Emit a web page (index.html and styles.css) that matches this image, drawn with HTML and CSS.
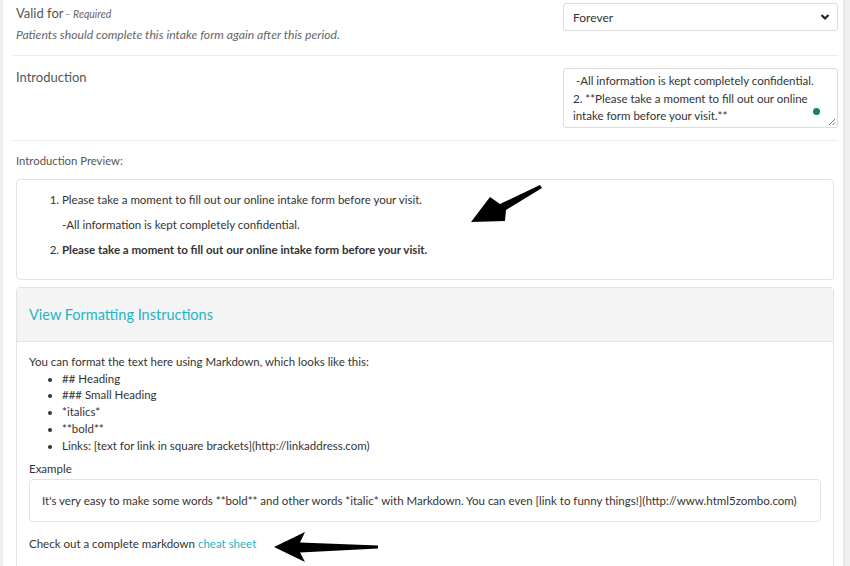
FILE: index.html
```html
<!DOCTYPE html>
<html lang="en">
<head>
    <meta charset="UTF-8">
    <meta name="viewport" content="width=device-width, initial-scale=1.0">
    <title>Intake form settings</title>
    <link rel="stylesheet" href="styles.css">
</head>
<body>
    <div id="page">
        <div class="formrow">
            <div class="labelcol">
                <div class="fieldlabel">Valid for<span class="required">– Required</span></div>
                <div class="hint">Patients should complete this intake form again after this period.</div>
            </div>
            <div class="selectbox">
                <span>Forever</span>
                <svg class="chevron" width="10" height="8" viewBox="0 0 10 8"><path d="M1.5 2 L5 5.5 L8.5 2" fill="none" stroke="#222" stroke-width="2.2"/></svg>
            </div>
        </div>

        <div class="formrow second">
            <div class="labelcol">
                <div class="fieldlabel">Introduction</div>
            </div>
            <div class="textbox">
                <div>&nbsp;-All information is kept completely confidential.</div>
                <div>2. **Please take a moment to fill out our online</div>
                <div>intake form before your visit.**</div>
                <span class="gdot"></span>
                <svg class="grip" width="9" height="9" viewBox="0 0 9 9"><path d="M8 2 L2 8 M8 5.5 L5.5 8" stroke="#777" stroke-width="1"/></svg>
            </div>
        </div>

        <div class="previewlabel">Introduction Preview:</div>
        <div class="previewbox">
            <ol>
                <li><p>Please take a moment to fill out our online intake form before your visit.</p>
                    <p>-All information is kept completely confidential.</p></li>
                <li><p><strong>Please take a moment to fill out our online intake form before your visit.</strong></p></li>
            </ol>
        </div>

        <div class="panel">
            <div class="panelhead">View Formatting Instructions</div>
            <div class="panelbody">
                <div>You can format the text here using Markdown, which looks like this:</div>
                <ul>
                    <li>## Heading</li>
                    <li>### Small Heading</li>
                    <li>*italics*</li>
                    <li>**bold**</li>
                    <li>Links: [text for link in square brackets](http://linkaddress.com)</li>
                </ul>
                <div class="examplelabel">Example</div>
                <div class="examplebox">It's very easy to make some words **bold** and other words *italic* with Markdown. You can even [link to funny things!](http://www.html5zombo.com)</div>
                <div class="cheat">Check out a complete markdown <a href="#">cheat sheet</a></div>
            </div>
        </div>

        <svg class="arrow1" width="80" height="50" viewBox="0 0 80 50">
            <polygon points="73,2 33,21 23,14 4,39 38,38 39,27 75,5" fill="#000"/>
        </svg>
        <svg class="arrow2" width="110" height="36" viewBox="0 0 110 36">
            <polygon points="2,18 33,3 28,13.5 106,16.5 106,19.5 28,23.5 33,33" fill="#000"/>
        </svg>
    </div>
</body>
</html>
```

FILE: styles.css
```css
body{
    margin: 0;
    background-color: #f0f0f0;
    font-family: Lato, "Open Sans", sans-serif;
    color: #333;
}

#page{
    position: relative;
    background-color: #fff;
    margin: 0 5px 0 3px;
    padding: 0 5px 0 9px;
    height: 566px;
    overflow: hidden;
    border-right: 2px solid #e6e6e6;
}

.formrow{
    display: flex;
    justify-content: space-between;
    align-items: flex-start;
    border-bottom: 1px solid #ececec;
    padding: 3px 0 13px 4px;
}

.formrow.second{
    padding: 12px 0 12px 4px;
}

.fieldlabel{
    font-size: 13px;
    line-height: 18px;
    color: #555;
    margin-top: 1px;
}

.second .fieldlabel{
    margin-top: 0;
}

.required{
    font-size: 10.5px;
    font-style: italic;
    color: #666;
    margin-left: 1px;
}

.hint{
    font-size: 12.2px;
    font-style: italic;
    color: #666;
    margin-top: 5px;
    line-height: 14px;
}

.selectbox{
    width: 275px;
    height: 28px;
    box-sizing: border-box;
    border: 1px solid #dcdcdc;
    border-radius: 3px;
    display: flex;
    align-items: center;
    justify-content: space-between;
    padding: 0 7px 0 9px;
    font-size: 12px;
    color: #333;
}

.textbox{
    position: relative;
    width: 275px;
    height: 60px;
    box-sizing: border-box;
    border: 1px solid #dcdcdc;
    border-radius: 3px;
    padding: 3px 8px 0 9px;
    font-size: 11.5px;
    line-height: 17.5px;
    color: #333;
    white-space: nowrap;
    overflow: hidden;
}

.gdot{
    position: absolute;
    right: 17px;
    top: 39px;
    width: 7px;
    height: 7px;
    border-radius: 50%;
    background-color: #11826b;
}

.grip{
    position: absolute;
    right: 1px;
    bottom: 1px;
}

.previewlabel{
    font-size: 11.3px;
    color: #555;
    padding: 12px 0 0 4px;
    line-height: 16px;
}

.previewbox{
    margin: 10px 0 0 4px;
    width: 816px;
    border: 1px solid #e3e3e3;
    border-radius: 4px;
    padding: 12px 0 12px 0;
    font-size: 11.5px;
    line-height: 16px;
    color: #333;
}

.previewbox ol{
    margin: 0;
    padding-left: 45px;
}

.previewbox p{
    margin: 0 0 9px 0;
}

.panel{
    margin: 7px 0 0 4px;
    width: 816px;
    border: 1px solid #e3e3e3;
    border-radius: 4px 4px 0 0;
}

.panelhead{
    background-color: #f4f4f4;
    border-bottom: 1px solid #e3e3e3;
    height: 53px;
    line-height: 53px;
    padding-left: 12px;
    font-size: 14.5px;
    color: #1cb5c6;
}

.panelbody{
    padding: 12px 12px 30px 12px;
    font-size: 11.5px;
    line-height: 16.7px;
    color: #333;
}

.panelbody ul{
    margin: 0;
    padding-left: 33px;
}

.examplelabel{
    margin-top: 7px;
}

.examplebox{
    margin-top: 1px;
    border: 1px solid #e3e3e3;
    border-radius: 4px;
    padding: 12px 12px;
    line-height: 17px;
}

.cheat{
    margin-top: 14px;
}

.cheat a{
    color: #1cb5c6;
    text-decoration: none;
}

.arrow1{
    position: absolute;
    left: 464px;
    top: 183px;
}

.arrow2{
    position: absolute;
    left: 269px;
    top: 529px;
}
```
